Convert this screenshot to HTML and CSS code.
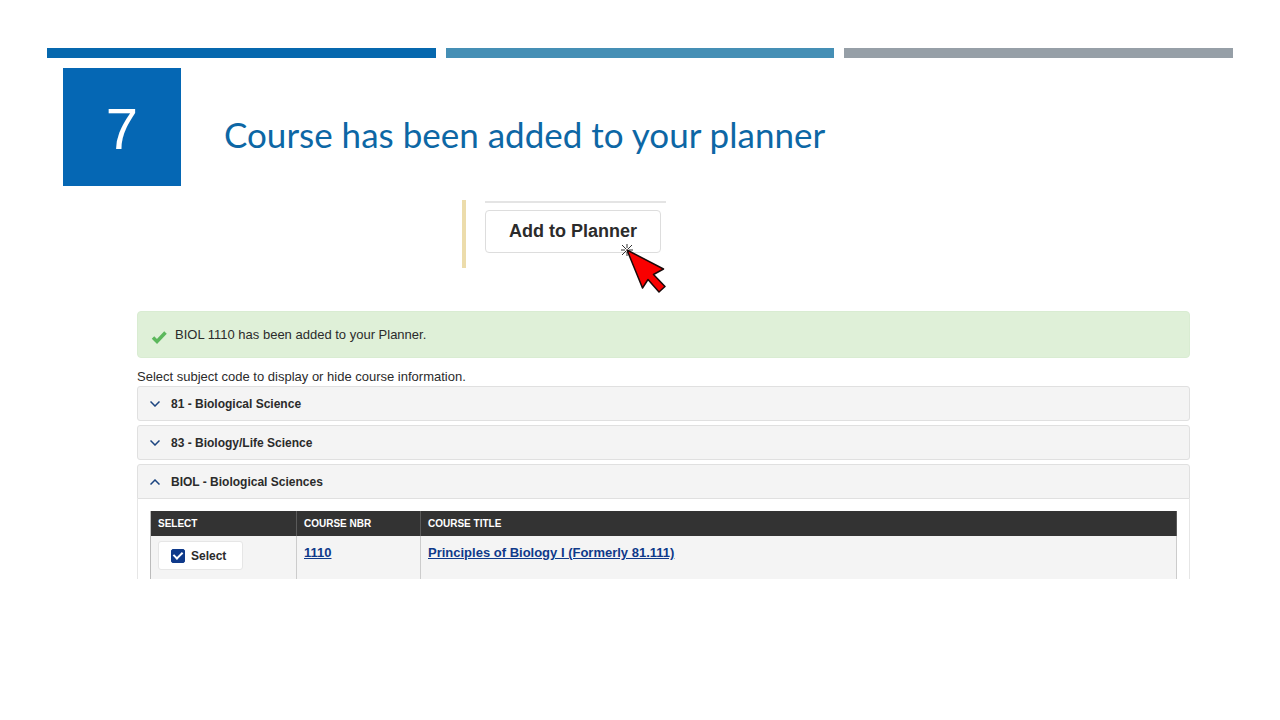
FILE: index.html
```html
<!DOCTYPE html>
<html lang="en">
<head>
  <meta charset="UTF-8" />
  <meta name="viewport" content="width=device-width, initial-scale=1" />
  <title>Course has been added to your planner</title>
  <link rel="stylesheet" href="styles.css">
</head>
<body>

  <main class="slide">
    <div class="bars">
      <span class="bar bar-blue"></span>
      <span class="bar bar-teal"></span>
      <span class="bar bar-gray"></span>
    </div>

    <header class="heading">
      <div class="step">7</div>
      <h1>Course has been added to your planner</h1>
    </header>

    <div class="snippet">
      <div class="snippet-inner">
        <div class="add-wrap">
          <button class="btn-add" type="button">Add to Planner</button>
          <svg class="pointer" width="48" height="52" viewBox="0 0 48 52" aria-hidden="true">
            <g stroke="#333" stroke-width="1">
              <path d="M7 1v4M7 9v4M1 7h4M9 7h4M2 2l4 4M12 2l-4 4M2 12l4-4" />
            </g>
            <path d="M7 7L43.500 26L33.500 31.500L45 43.500L39 49L28 36.500L22.500 45Z" fill="#f90000" stroke="#1a0808" stroke-width="1.500" stroke-linejoin="round" />
          </svg>
        </div>
      </div>
    </div>

    <section class="results">
      <div class="alert" role="status">
        <svg width="16" height="14" viewBox="0 0 16 14" aria-hidden="true">
          <path d="M2 7.500L6 11.500L14.500 2.500" fill="none" stroke="#5cb85c" stroke-width="3.500" />
        </svg>
        <span>BIOL 1110 has been added to your Planner.</span>
      </div>

      <p class="hint">Select subject code to display or hide course information.</p>

      <div class="subjects">
        <button class="subject" type="button" aria-expanded="false">
          <svg width="10" height="6" viewBox="0 0 10 6" aria-hidden="true"><path d="M.5 .5l4.500 4.500 4.500-4.500" /></svg>
          81 - Biological Science
        </button>
        <button class="subject" type="button" aria-expanded="false">
          <svg width="10" height="6" viewBox="0 0 10 6" aria-hidden="true"><path d="M.5 .5l4.500 4.500 4.500-4.500" /></svg>
          83 - Biology/Life Science
        </button>
        <div class="open">
          <button class="subject" type="button" aria-expanded="true">
            <svg width="10" height="6" viewBox="0 0 10 6" aria-hidden="true"><path d="M.5 5.500l4.500-4.500 4.500 4.500" /></svg>
            BIOL - Biological Sciences
          </button>
          <div class="courses">
            <table>
              <thead>
                <tr>
                  <th class="col-select">Select</th>
                  <th class="col-nbr">Course Nbr</th>
                  <th>Course Title</th>
                </tr>
              </thead>
              <tbody>
                <tr>
                  <td>
                    <label class="pick" for="biol1110">
                      <input type="checkbox" id="biol1110" checked />
                      Select
                    </label>
                  </td>
                  <td><a href="#">1110</a></td>
                  <td><a href="#">Principles of Biology I (Formerly 81.111)</a></td>
                </tr>
              </tbody>
            </table>
          </div>
        </div>
      </div>
    </section>
  </main>

</body>
</html>
```
FILE: styles.css
```css
*, *::before { box-sizing: border-box; }
body {
  margin: 0;
  background: #fff;
  color: #2b2b2b;
  font-family: "Liberation Sans", Arial, sans-serif;
  font-size: 13px;
}
button {
  font-family: inherit;
  cursor: pointer;
}
.slide {
  padding: 48px 47px;
}

/* top bars */
.bars {
  display: flex;
  gap: 10px;
}
.bar {
  flex: 1;
  height: 10px;
}
.bar-blue { background: #0668ae; }
.bar-teal { background: #458fb5; }
.bar-gray { background: #969fa7; }

/* heading */
.heading {
  display: flex;
  align-items: center;
  gap: 43px;
  margin: 10px 16px 0;
}
.step {
  flex: none;
  width: 118px;
  height: 118px;
  background: #0567b4;
  color: #fff;
  font-size: 58px;
  line-height: 122px;
  text-align: center;
}
h1 {
  margin: 0;
  padding-top: 14px;
  color: #0d67a5;
  font-family: Corbel, Lato, sans-serif;
  font-size: 35px;
  font-weight: 400;
  line-height: 48px;
}

/* button snippet */
.snippet {
  margin: 14px 0 0 35%;
}
.snippet-inner {
  display: inline-block;
  padding-left: 19px;
  border-left: 4px solid #ecdcab;
  height: 68px;
}
.add-wrap {
  position: relative;
  padding-right: 5px;
}
.add-wrap::before {
  content: "";
  display: block;
  margin: 0 -5px 7px 0;
  height: 3px;
  border-bottom: 2px solid #e4e4e4;
}
.btn-add {
  height: 43px;
  padding: 0 23px;
  background: #fff;
  border: 1px solid #ddd;
  border-radius: 4px;
  color: #2b2b2b;
  font-size: 18px;
  font-weight: bold;
}
.pointer {
  position: absolute;
  right: -2px;
  top: 43px;
}

/* planner results */
.results {
  margin: 43px 43px 0 90px;
}
.alert {
  display: flex;
  align-items: center;
  gap: 8px;
  height: 47px;
  padding: 0 13px;
  background: #dff0d8;
  border: 1px solid #d9ecd2;
  border-radius: 4px;
}
.alert svg {
  margin-top: 4px;
}
.hint {
  margin: 11px 0 1px;
  line-height: 16px;
}
.subjects {
  display: flex;
  flex-direction: column;
  gap: 4px;
}
.subject {
  display: flex;
  align-items: center;
  gap: 11px;
  width: 100%;
  height: 35px;
  padding: 0 12px;
  background: #f4f4f4;
  border: 1px solid #e0e0e0;
  border-radius: 3px;
  color: #2b2b2b;
  font-size: 12px;
  font-weight: bold;
}
.subject path {
  fill: none;
  stroke: #1b4480;
  stroke-width: 1.5;
}
.open .subject {
  border-radius: 3px 3px 0 0;
}
.courses {
  padding: 12px 12px 0;
  border: solid #e6e6e6;
  border-width: 0 1px;
}
table {
  width: 100%;
  border-collapse: collapse;
  table-layout: fixed;
  border: 1px solid #bbb;
  border-width: 0 1px;
}
th {
  height: 25px;
  padding: 0 7px;
  background: #333;
  border-right: 1px solid #5a5a5a;
  color: #fff;
  font-size: 10px;
  text-align: left;
  text-transform: uppercase;
}
.col-select { width: 146px; }
.col-nbr { width: 124px; }
td {
  height: 43px;
  padding: 5px 7px 0;
  background: #f4f4f4;
  border-right: 1px solid #ccc;
  font-weight: bold;
  vertical-align: top;
}
td a {
  display: inline-block;
  margin-top: 4px;
  color: #0f3a8a;
}
.pick {
  display: inline-flex;
  align-items: center;
  gap: 6px;
  height: 29px;
  padding: 0 16px 0 12px;
  background: #fff;
  border: 1px solid #e6e6e6;
  border-radius: 3px;
  font-size: 12px;
}
.pick input {
  appearance: none;
  display: flex;
  justify-content: center;
  width: 14px;
  height: 14px;
  margin: 0;
  background: #fff;
  border: 1px solid #0f3a8a;
  border-radius: 2px;
}
.pick input:checked { background: #0f3a8a; }
.pick input:checked::before {
  content: "";
  width: 6px;
  height: 9px;
  border: solid #fff;
  border-width: 0 2px 2px 0;
  transform: rotate(45deg);
}
```
